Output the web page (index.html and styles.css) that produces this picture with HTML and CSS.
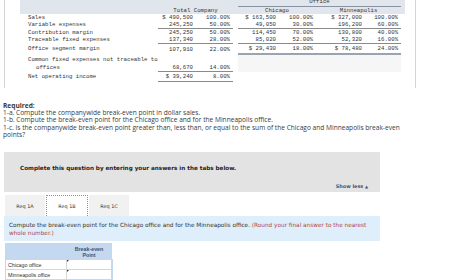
FILE: index.html
```html
<!DOCTYPE html>
<html>
<head>
<meta charset="utf-8">
<link rel="stylesheet" href="styles.css">
</head>
<body>
<div class="figure">
  <table class="fin">
    <colgroup>
      <col class="c-label"><col class="c-amt"><col class="c-pct"><col class="c-gap">
      <col class="c-amt2"><col class="c-pct2"><col class="c-amt3"><col class="c-pct3"><col class="c-end">
    </colgroup>
    <tr class="hd hd1">
      <td></td><td></td><td></td><td></td>
      <td colspan="4" class="office">Office</td><td></td>
    </tr>
    <tr class="hd hd2">
      <td></td><td colspan="2" class="ctr">Total Company</td><td></td>
      <td colspan="2" class="ctr">Chicago</td><td colspan="2" class="ctr">Minneapolis</td><td></td>
    </tr>
    <tr class="first">
      <td class="lbl">Sales</td><td class="n">$ 490,500</td><td class="p">100.00%</td><td></td>
      <td class="n">$ 163,500</td><td class="p">100.00%</td><td class="n">$ 327,000</td><td class="p">100.00%</td><td></td>
    </tr>
    <tr class="ul">
      <td class="lbl">Variable expenses</td><td class="n">245,250</td><td class="p">50.00%</td><td></td>
      <td class="n">49,050</td><td class="p">30.00%</td><td class="n">196,200</td><td class="p">60.00%</td><td></td>
    </tr>
    <tr>
      <td class="lbl">Contribution margin</td><td class="n">245,250</td><td class="p">50.00%</td><td></td>
      <td class="n">114,450</td><td class="p">70.00%</td><td class="n">130,800</td><td class="p">40.00%</td><td></td>
    </tr>
    <tr class="ul">
      <td class="lbl">Traceable fixed expenses</td><td class="n">137,340</td><td class="p">28.00%</td><td></td>
      <td class="n">85,020</td><td class="p">52.00%</td><td class="n">52,320</td><td class="p">16.00%</td><td></td>
    </tr>
    <tr class="seg">
      <td class="lbl">Office segment margin</td><td class="n">107,910</td><td class="p">22.00%</td><td></td>
      <td class="n dbl">$ 29,430</td><td class="p dbl">18.00%</td><td class="n dbl">$ 78,480</td><td class="p dbl">24.00%</td><td></td>
    </tr>
    <tr class="cf1">
      <td class="lbl">Common fixed expenses not traceable to</td><td></td><td></td><td></td>
      <td class="shade"></td><td class="shade"></td><td class="shade"></td><td class="shade"></td><td></td>
    </tr>
    <tr class="ul">
      <td class="lbl ind">offices</td><td class="n">68,670</td><td class="p">14.00%</td><td></td>
      <td class="shade noline"></td><td class="shade noline"></td><td class="shade noline"></td><td class="shade noline"></td><td></td>
    </tr>
    <tr class="net">
      <td class="lbl">Net operating income</td><td class="n">$ 39,240</td><td class="p">8.00%</td><td></td>
      <td></td><td></td><td></td><td></td><td></td>
    </tr>
  </table>
</div>

<div class="required">
  <p class="req-title">Required:</p>
  <p>1-a. Compute the companywide break-even point in dollar sales.</p>
  <p>1-b. Compute the break-even point for the Chicago office and for the Minneapolis office.</p>
  <p>1-c. Is the companywide break-even point greater than, less than, or equal to the sum of the Chicago and Minneapolis break-even points?</p>
</div>

<div class="complete">
  <p class="complete-text">Complete this question by entering your answers in the tabs below.</p>
  <div class="show-less">Show less <span class="tri">&#9650;</span></div>
</div>

<div class="tabs">
  <div class="tab">Req 1A</div>
  <div class="tab active">Req 1B</div>
  <div class="tab">Req 1C</div>
</div>

<div class="panel">
  Compute the break-even point for the Chicago office and for the Minneapolis office. <span class="red">(Round your final answer to the nearest whole number.)</span>
</div>

<table class="ans">
  <tr>
    <th class="blank"></th>
    <th class="head">Break-even<br>Point</th>
  </tr>
  <tr>
    <td class="rl">Chicago office</td>
    <td class="inp"><span class="mark"></span></td>
  </tr>
  <tr>
    <td class="rl">Minneapolis office</td>
    <td class="inp"><span class="mark"></span></td>
  </tr>
</table>
</body>
</html>
```

FILE: styles.css
```css
html, body {
  margin: 0;
  padding: 0;
  background: #ffffff;
}
body {
  width: 474px;
  height: 280px;
  overflow: hidden;
  font-family: "Liberation Sans", Arial, sans-serif;
  color: #333;
}

/* ---- financial figure ---- */
.figure {
  margin-left: 4px;
  width: 412px;
  height: 88px;
  border-left: 1px solid #d4d4d4;
  border-right: 1px solid #d4d4d4;
  overflow: hidden;
  box-sizing: border-box;
}
.fin {
  margin-left: 15px;
  margin-top: -3px;
  border-collapse: collapse;
  table-layout: fixed;
  width: 385px;
  font-family: "Liberation Mono", "DejaVu Sans Mono", monospace;
  font-size: 5.7px;
  color: #333;
}
.c-label { width: 138px; }
.c-amt { width: 37px; }
.c-pct { width: 38px; }
.c-gap { width: 5px; }
.c-amt2 { width: 40px; }
.c-pct2 { width: 38px; }
.c-amt3 { width: 48px; }
.c-pct3 { width: 37px; }
.c-end { width: 4px; }

.fin td {
  padding: 0;
  height: 7px;
  line-height: 7px;
  white-space: nowrap;
}
.fin .hd td { background: #e1e5ec; }
.fin .hd1 td { height: 9px; line-height: 8px; }
.fin .hd2 td { height: 7px; line-height: 7px; }
.fin .office { text-align: center; border-bottom: 1px solid #8a93a3; }
.fin .ctr { text-align: center; }
.fin .lbl { padding-left: 8px; }
.fin .ind { padding-left: 16px; }
.fin .n { text-align: right; padding-right: 2px; }
.fin .p { text-align: right; padding-right: 3px; }
.fin .ul .n, .fin .ul .p { border-bottom: 1px solid #8a8a8a; }
.fin .seg td { height: 8px; line-height: 9px; }
.fin .dbl { border-bottom: 2px solid #9aa3b2; }
.fin .cf1 td { height: 9px; line-height: 9px; }
.fin .shade { background: #f6f6f6; }
.fin .ul .noline { border-bottom: 0; }
.fin .net td { height: 8px; line-height: 9px; }
.fin .net .n, .fin .net .p { border-bottom: 1px solid #8a8a8a; }

/* ---- required text ---- */
.required {
  margin-top: 14px;
  padding-left: 3px;
  font-family: "Open Sans", "Liberation Sans", sans-serif;
  font-size: 6.6px;
  line-height: 7.2px;
  color: #3a3a3a;
  width: 405px;
}
.required p { margin: 0; }
.required .req-title { font-weight: bold; }

/* ---- complete box ---- */
.complete {
  margin: 14px 0 0 4px;
  width: 376px;
  height: 40px;
  background: #e3e3e3;
  box-sizing: border-box;
  padding: 13px 12px 0 16px;
  display: flex;
  flex-direction: column;
}
.complete-text {
  margin: 0;
  font-family: "DejaVu Sans", Verdana, sans-serif;
  font-weight: bold;
  font-size: 5.65px;
  color: #222;
}
.show-less {
  margin-top: 12px;
  align-self: flex-end;
  font-family: "DejaVu Sans", Verdana, sans-serif;
  font-weight: bold;
  font-size: 4.9px;
  color: #3b5478;
}
.show-less .tri { font-size: 4px; }

/* ---- tabs ---- */
.tabs {
  display: flex;
  margin-left: 5px;
  height: 21px;
  margin-top: 3px;
}
.tab {
  width: 40px;
  background: #f1f1f1;
  display: flex;
  align-items: center;
  justify-content: center;
  font-family: "DejaVu Sans", Verdana, sans-serif;
  font-size: 4.9px;
  color: #333;
  box-sizing: border-box;
}
.tab + .tab { margin-left: 1px; }
.tab.active {
  width: 42px;
  background: #fff;
  border: 1px dotted #8a93a3;
  border-bottom: 0;
}

/* ---- panel ---- */
.panel {
  margin-left: 4px;
  width: 376px;
  height: 25px;
  background: #deeefa;
  box-sizing: border-box;
  padding: 6px 8px 0 5px;
  font-family: "DejaVu Sans", Verdana, sans-serif;
  font-size: 5.75px;
  line-height: 7.5px;
  color: #333;
}
.panel .red { color: #b34747; }

/* ---- answer table ---- */
.ans {
  margin: 2px 0 0 5px;
  border-collapse: collapse;
  font-family: "Liberation Sans", Arial, sans-serif;
  font-size: 5.3px;
}
.ans th {
  background: #c4d8ef;
  height: 15px;
  padding: 0;
  border: 1px solid #c4d8ef;
}
.ans .blank { width: 60px; }
.ans .head {
  width: 44px;
  color: #3b5478;
  font-weight: bold;
  line-height: 6px;
  font-size: 5.3px;
  border-left: 1px solid #fff;
}
.ans td {
  height: 9px;
  padding: 0;
  border: 1px solid #c4d8ef;
}
.ans .rl {
  padding-left: 2px;
  color: #333;
  background: #fff;
  border-color: #d6d6d6;
  border-left-color: #c4d8ef;
}
.ans .inp {
  position: relative;
  background: #fff;
  border-left: 1px solid #9db6d6;
  border-right: 2px solid #c4d8ef;
}
.ans .mark {
  position: absolute;
  top: 0;
  left: 0;
  width: 0;
  height: 0;
  border-top: 2px solid #333;
  border-right: 2px solid transparent;
}
```
